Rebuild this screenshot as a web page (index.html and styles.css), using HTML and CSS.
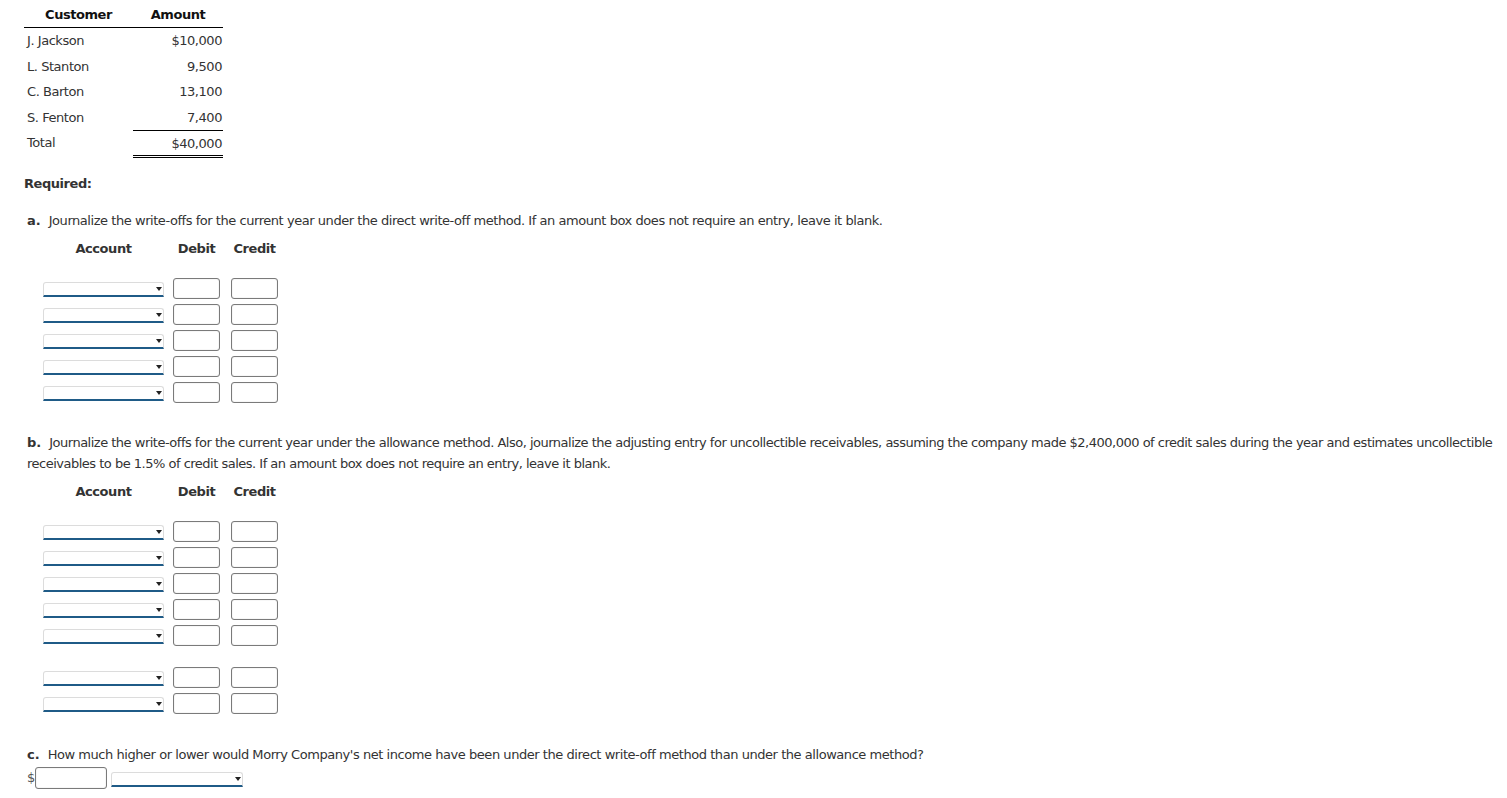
FILE: index.html
```html
<!DOCTYPE html>
<html>
<head>
<meta charset="utf-8">
<link rel="stylesheet" href="styles.css">
</head>
<body>
<div class="page">
  <div class="ar-table">
    <div class="ar-row ar-head">
      <div class="c-cust">Customer</div>
      <div class="c-amt">Amount</div>
    </div>
    <div class="ar-row"><div class="c-cust">J. Jackson</div><div class="c-amt">$10,000</div></div>
    <div class="ar-row"><div class="c-cust">L. Stanton</div><div class="c-amt">9,500</div></div>
    <div class="ar-row"><div class="c-cust">C. Barton</div><div class="c-amt">13,100</div></div>
    <div class="ar-row"><div class="c-cust">S. Fenton</div><div class="c-amt">7,400</div></div>
    <div class="ar-row ar-total"><div class="c-cust">Total</div><div class="c-amt">$40,000</div></div>
  </div>

  <p class="required">Required:</p>

  <p class="question q-a"><b class="q-label">a.</b>Journalize the write-offs for the current year under the direct write-off method. If an amount box does not require an entry, leave it blank.</p>

  <div class="journal">
    <div class="j-head"><span class="h-acct">Account</span><span class="h-dr">Debit</span><span class="h-cr">Credit</span></div>
    <div class="j-rows">
      <div class="j-row"><span class="sel"></span><span class="amt"></span><span class="amt"></span></div>
      <div class="j-row"><span class="sel"></span><span class="amt"></span><span class="amt"></span></div>
      <div class="j-row"><span class="sel"></span><span class="amt"></span><span class="amt"></span></div>
      <div class="j-row"><span class="sel"></span><span class="amt"></span><span class="amt"></span></div>
      <div class="j-row"><span class="sel"></span><span class="amt"></span><span class="amt"></span></div>
    </div>
  </div>

  <p class="question q-b"><b class="q-label">b.</b>Journalize the write-offs for the current year under the allowance method. Also, journalize the adjusting entry for uncollectible receivables, assuming the company made $2,400,000 of credit sales during the year and estimates uncollectible receivables to be 1.5% of credit sales. If an amount box does not require an entry, leave it blank.</p>

  <div class="journal">
    <div class="j-head"><span class="h-acct">Account</span><span class="h-dr">Debit</span><span class="h-cr">Credit</span></div>
    <div class="j-rows">
      <div class="j-row"><span class="sel"></span><span class="amt"></span><span class="amt"></span></div>
      <div class="j-row"><span class="sel"></span><span class="amt"></span><span class="amt"></span></div>
      <div class="j-row"><span class="sel"></span><span class="amt"></span><span class="amt"></span></div>
      <div class="j-row"><span class="sel"></span><span class="amt"></span><span class="amt"></span></div>
      <div class="j-row"><span class="sel"></span><span class="amt"></span><span class="amt"></span></div>
    </div>
    <div class="j-rows j-rows-2">
      <div class="j-row"><span class="sel"></span><span class="amt"></span><span class="amt"></span></div>
      <div class="j-row"><span class="sel"></span><span class="amt"></span><span class="amt"></span></div>
    </div>
  </div>

  <p class="question q-c"><b class="q-label">c.</b>How much higher or lower would Morry Company's net income have been under the direct write-off method than under the allowance method?</p>
  <div class="c-answer"><span class="dollar">$</span><span class="amt amt-wide"></span><span class="sel sel-wide"></span></div>
</div>
</body>
</html>
```
FILE: styles.css
```css
html, body {
  margin: 0;
  padding: 0;
  background: #fff;
}
body {
  font-family: "DejaVu Sans", Verdana, sans-serif;
  font-size: 13px;
  letter-spacing: -0.45px;
  color: #333;
}
.page {
  padding: 0 0 0 24px;
}
b { font-weight: bold; }
.q-label {
  display: inline-block;
  margin-right: 8px;
  letter-spacing: 0;
}

/* customer table */
.ar-table {
  width: 199px;
}
.ar-row {
  display: flex;
  height: 25.5px;
  line-height: 25px;
}
.c-cust {
  width: 106px;
  padding-left: 3px;
}
.c-amt {
  width: 89px;
  margin-left: auto;
  text-align: right;
  padding-right: 1px;
}
.ar-head {
  height: 24px;
  line-height: 24px;
  padding-top: 3px;
  border-bottom: 1px solid #000;
  font-weight: bold;
  color: #111;
}
.ar-head .c-cust {
  padding-left: 0;
  width: 109px;
  text-align: center;
}
.ar-head .c-amt {
  width: 90px;
  text-align: center;
  padding-right: 0;
}
.ar-total .c-amt {
  border-top: 1px solid #000;
  border-bottom: 3px double #000;
  height: 24px;
  line-height: 25px;
}
.ar-total {
  height: 28px;
}

/* text */
.required {
  margin: 15px 0 0;
  line-height: 21px;
  font-weight: bold;
}
.question {
  margin: 0;
  line-height: 21px;
  padding-left: 3px;
}
.q-a { margin-top: 16px; }
.q-b { margin-top: 27px; letter-spacing: -0.5px; }
.q-c { margin-top: 28px; }

/* journal */
.journal {
  margin-top: 7px;
  padding-left: 19px;
}
.j-head {
  display: flex;
  line-height: 21px;
  font-weight: bold;
}
.h-acct { width: 121px; text-align: center; }
.h-dr { width: 47px; margin-left: 9px; text-align: center; }
.h-cr { width: 47px; margin-left: 11px; text-align: center; }
.j-rows {
  margin-top: 16px;
}
.j-rows-2 {
  margin-top: 16px;
}
.j-row {
  display: flex;
  align-items: center;
  height: 26px;
}
.sel {
  position: relative;
  display: inline-block;
  box-sizing: border-box;
  width: 121px;
  height: 15px;
  margin-top: 2px;
  border: 1px solid #dcdcdc;
  border-bottom: 2px solid #1f5b87;
  border-radius: 3px 3px 0 0;
  background: #fff;
}
.sel::after {
  content: "";
  position: absolute;
  right: 1px;
  top: 4px;
  border-left: 3px solid transparent;
  border-right: 3px solid transparent;
  border-top: 4px solid #222;
}
.amt {
  display: inline-block;
  box-sizing: border-box;
  width: 47px;
  height: 21px;
  border: 1px solid #7a7a7a;
  border-radius: 3px;
  box-shadow: inset 0 0 1px #aaa;
  background: #fff;
}
.j-row .amt { margin-left: 9px; }
.j-row .amt + .amt { margin-left: 11px; }

.c-answer {
  display: flex;
  align-items: center;
  height: 22px;
  margin-top: 2px;
  padding-left: 3px;
}
.dollar {
  width: 8px;
  line-height: 22px;
  color: #555;
}
.amt-wide {
  width: 72px;
  height: 22px;
}
.sel-wide {
  width: 132px;
  margin-left: 4px;
}
```
